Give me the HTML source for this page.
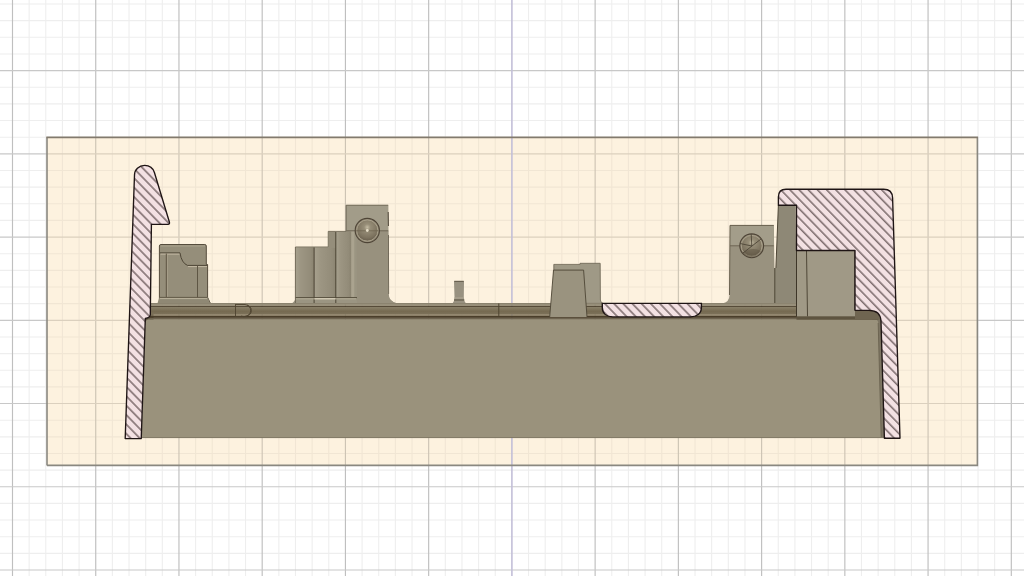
<!DOCTYPE html>
<html><head><meta charset="utf-8">
<style>
html,body{margin:0;padding:0;background:#ffffff;}
body{width:1024px;height:576px;overflow:hidden;position:relative;font-family:"Liberation Sans",sans-serif;}
svg{position:absolute;left:0;top:0;display:block;filter:blur(0.35px);}
</style></head><body>
<svg width="1024" height="576" viewBox="0 0 1024 576">
<defs>
<clipPath id="rc"><rect x="47" y="137.4" width="930.4" height="328"/></clipPath>
<pattern id="hatch" patternUnits="userSpaceOnUse" width="6.570" height="6.570" patternTransform="rotate(-44.24)">
<rect x="-1" y="-1" width="8.6" height="8.6" fill="#f3e1e3"/>
<line x1="4.67" y1="-1" x2="4.67" y2="8" stroke="#3e2e2e" stroke-width="1.0"/>
</pattern>
<pattern id="hatch2" patternUnits="userSpaceOnUse" width="6.570" height="6.570" patternTransform="rotate(-44.24)">
<rect x="-1" y="-1" width="8.6" height="8.6" fill="#f3e1e3"/>
<line x1="6.47" y1="-1" x2="6.47" y2="8" stroke="#3e2e2e" stroke-width="1.0"/>
<line x1="-0.1" y1="-1" x2="-0.1" y2="8" stroke="#3e2e2e" stroke-width="1.0"/>
</pattern>
<radialGradient id="screw" cx="0.5" cy="0.35" r="0.6">
<stop offset="0" stop-color="#c4bba3"/>
<stop offset="0.25" stop-color="#978e78"/>
<stop offset="0.8" stop-color="#7e7460"/>
<stop offset="1" stop-color="#6e6452"/>
</radialGradient>
<linearGradient id="railg" x1="0" y1="0" x2="0" y2="1">
<stop offset="0" stop-color="#898069"/>
<stop offset="0.55" stop-color="#766a51"/>
<stop offset="1" stop-color="#7d735b"/>
</linearGradient>
<linearGradient id="col" x1="0" y1="0" x2="1" y2="0">
<stop offset="0" stop-color="#a6a08d"/>
<stop offset="0.25" stop-color="#9d9683"/>
<stop offset="0.8" stop-color="#938c79"/>
<stop offset="1" stop-color="#8a8370"/>
</linearGradient>
</defs>
<rect width="1024" height="576" fill="#ffffff"/>
<g><line x1="29.14" y1="0" x2="29.14" y2="576" stroke="#eeeeee" stroke-width="1.1"/>
<line x1="45.78" y1="0" x2="45.78" y2="576" stroke="#eeeeee" stroke-width="1.1"/>
<line x1="62.43" y1="0" x2="62.43" y2="576" stroke="#eeeeee" stroke-width="1.1"/>
<line x1="79.08" y1="0" x2="79.08" y2="576" stroke="#eeeeee" stroke-width="1.1"/>
<line x1="112.37" y1="0" x2="112.37" y2="576" stroke="#eeeeee" stroke-width="1.1"/>
<line x1="129.02" y1="0" x2="129.02" y2="576" stroke="#eeeeee" stroke-width="1.1"/>
<line x1="145.67" y1="0" x2="145.67" y2="576" stroke="#eeeeee" stroke-width="1.1"/>
<line x1="162.31" y1="0" x2="162.31" y2="576" stroke="#eeeeee" stroke-width="1.1"/>
<line x1="195.61" y1="0" x2="195.61" y2="576" stroke="#eeeeee" stroke-width="1.1"/>
<line x1="212.25" y1="0" x2="212.25" y2="576" stroke="#eeeeee" stroke-width="1.1"/>
<line x1="228.90" y1="0" x2="228.90" y2="576" stroke="#eeeeee" stroke-width="1.1"/>
<line x1="245.55" y1="0" x2="245.55" y2="576" stroke="#eeeeee" stroke-width="1.1"/>
<line x1="278.84" y1="0" x2="278.84" y2="576" stroke="#eeeeee" stroke-width="1.1"/>
<line x1="295.49" y1="0" x2="295.49" y2="576" stroke="#eeeeee" stroke-width="1.1"/>
<line x1="312.14" y1="0" x2="312.14" y2="576" stroke="#eeeeee" stroke-width="1.1"/>
<line x1="328.78" y1="0" x2="328.78" y2="576" stroke="#eeeeee" stroke-width="1.1"/>
<line x1="362.08" y1="0" x2="362.08" y2="576" stroke="#eeeeee" stroke-width="1.1"/>
<line x1="378.72" y1="0" x2="378.72" y2="576" stroke="#eeeeee" stroke-width="1.1"/>
<line x1="395.37" y1="0" x2="395.37" y2="576" stroke="#eeeeee" stroke-width="1.1"/>
<line x1="412.02" y1="0" x2="412.02" y2="576" stroke="#eeeeee" stroke-width="1.1"/>
<line x1="445.31" y1="0" x2="445.31" y2="576" stroke="#eeeeee" stroke-width="1.1"/>
<line x1="461.96" y1="0" x2="461.96" y2="576" stroke="#eeeeee" stroke-width="1.1"/>
<line x1="478.61" y1="0" x2="478.61" y2="576" stroke="#eeeeee" stroke-width="1.1"/>
<line x1="495.25" y1="0" x2="495.25" y2="576" stroke="#eeeeee" stroke-width="1.1"/>
<line x1="528.55" y1="0" x2="528.55" y2="576" stroke="#eeeeee" stroke-width="1.1"/>
<line x1="545.19" y1="0" x2="545.19" y2="576" stroke="#eeeeee" stroke-width="1.1"/>
<line x1="561.84" y1="0" x2="561.84" y2="576" stroke="#eeeeee" stroke-width="1.1"/>
<line x1="578.49" y1="0" x2="578.49" y2="576" stroke="#eeeeee" stroke-width="1.1"/>
<line x1="611.78" y1="0" x2="611.78" y2="576" stroke="#eeeeee" stroke-width="1.1"/>
<line x1="628.43" y1="0" x2="628.43" y2="576" stroke="#eeeeee" stroke-width="1.1"/>
<line x1="645.08" y1="0" x2="645.08" y2="576" stroke="#eeeeee" stroke-width="1.1"/>
<line x1="661.72" y1="0" x2="661.72" y2="576" stroke="#eeeeee" stroke-width="1.1"/>
<line x1="695.02" y1="0" x2="695.02" y2="576" stroke="#eeeeee" stroke-width="1.1"/>
<line x1="711.66" y1="0" x2="711.66" y2="576" stroke="#eeeeee" stroke-width="1.1"/>
<line x1="728.31" y1="0" x2="728.31" y2="576" stroke="#eeeeee" stroke-width="1.1"/>
<line x1="744.96" y1="0" x2="744.96" y2="576" stroke="#eeeeee" stroke-width="1.1"/>
<line x1="778.25" y1="0" x2="778.25" y2="576" stroke="#eeeeee" stroke-width="1.1"/>
<line x1="794.90" y1="0" x2="794.90" y2="576" stroke="#eeeeee" stroke-width="1.1"/>
<line x1="811.55" y1="0" x2="811.55" y2="576" stroke="#eeeeee" stroke-width="1.1"/>
<line x1="828.19" y1="0" x2="828.19" y2="576" stroke="#eeeeee" stroke-width="1.1"/>
<line x1="861.49" y1="0" x2="861.49" y2="576" stroke="#eeeeee" stroke-width="1.1"/>
<line x1="878.13" y1="0" x2="878.13" y2="576" stroke="#eeeeee" stroke-width="1.1"/>
<line x1="894.78" y1="0" x2="894.78" y2="576" stroke="#eeeeee" stroke-width="1.1"/>
<line x1="911.43" y1="0" x2="911.43" y2="576" stroke="#eeeeee" stroke-width="1.1"/>
<line x1="944.72" y1="0" x2="944.72" y2="576" stroke="#eeeeee" stroke-width="1.1"/>
<line x1="961.37" y1="0" x2="961.37" y2="576" stroke="#eeeeee" stroke-width="1.1"/>
<line x1="978.02" y1="0" x2="978.02" y2="576" stroke="#eeeeee" stroke-width="1.1"/>
<line x1="994.66" y1="0" x2="994.66" y2="576" stroke="#eeeeee" stroke-width="1.1"/>
<line x1="0" y1="4.01" x2="1024" y2="4.01" stroke="#eeeeee" stroke-width="1.1"/>
<line x1="0" y1="20.66" x2="1024" y2="20.66" stroke="#eeeeee" stroke-width="1.1"/>
<line x1="0" y1="37.31" x2="1024" y2="37.31" stroke="#eeeeee" stroke-width="1.1"/>
<line x1="0" y1="53.95" x2="1024" y2="53.95" stroke="#eeeeee" stroke-width="1.1"/>
<line x1="0" y1="87.25" x2="1024" y2="87.25" stroke="#eeeeee" stroke-width="1.1"/>
<line x1="0" y1="103.89" x2="1024" y2="103.89" stroke="#eeeeee" stroke-width="1.1"/>
<line x1="0" y1="120.54" x2="1024" y2="120.54" stroke="#eeeeee" stroke-width="1.1"/>
<line x1="0" y1="137.19" x2="1024" y2="137.19" stroke="#eeeeee" stroke-width="1.1"/>
<line x1="0" y1="170.48" x2="1024" y2="170.48" stroke="#eeeeee" stroke-width="1.1"/>
<line x1="0" y1="187.13" x2="1024" y2="187.13" stroke="#eeeeee" stroke-width="1.1"/>
<line x1="0" y1="203.78" x2="1024" y2="203.78" stroke="#eeeeee" stroke-width="1.1"/>
<line x1="0" y1="220.42" x2="1024" y2="220.42" stroke="#eeeeee" stroke-width="1.1"/>
<line x1="0" y1="253.72" x2="1024" y2="253.72" stroke="#eeeeee" stroke-width="1.1"/>
<line x1="0" y1="270.36" x2="1024" y2="270.36" stroke="#eeeeee" stroke-width="1.1"/>
<line x1="0" y1="287.01" x2="1024" y2="287.01" stroke="#eeeeee" stroke-width="1.1"/>
<line x1="0" y1="303.66" x2="1024" y2="303.66" stroke="#eeeeee" stroke-width="1.1"/>
<line x1="0" y1="336.95" x2="1024" y2="336.95" stroke="#eeeeee" stroke-width="1.1"/>
<line x1="0" y1="353.60" x2="1024" y2="353.60" stroke="#eeeeee" stroke-width="1.1"/>
<line x1="0" y1="370.25" x2="1024" y2="370.25" stroke="#eeeeee" stroke-width="1.1"/>
<line x1="0" y1="386.89" x2="1024" y2="386.89" stroke="#eeeeee" stroke-width="1.1"/>
<line x1="0" y1="420.19" x2="1024" y2="420.19" stroke="#eeeeee" stroke-width="1.1"/>
<line x1="0" y1="436.83" x2="1024" y2="436.83" stroke="#eeeeee" stroke-width="1.1"/>
<line x1="0" y1="453.48" x2="1024" y2="453.48" stroke="#eeeeee" stroke-width="1.1"/>
<line x1="0" y1="470.13" x2="1024" y2="470.13" stroke="#eeeeee" stroke-width="1.1"/>
<line x1="0" y1="503.42" x2="1024" y2="503.42" stroke="#eeeeee" stroke-width="1.1"/>
<line x1="0" y1="520.07" x2="1024" y2="520.07" stroke="#eeeeee" stroke-width="1.1"/>
<line x1="0" y1="536.72" x2="1024" y2="536.72" stroke="#eeeeee" stroke-width="1.1"/>
<line x1="0" y1="553.36" x2="1024" y2="553.36" stroke="#eeeeee" stroke-width="1.1"/>
<line x1="12.49" y1="0" x2="12.49" y2="576" stroke="#bfbfbf" stroke-width="1.15"/>
<line x1="95.73" y1="0" x2="95.73" y2="576" stroke="#bfbfbf" stroke-width="1.15"/>
<line x1="178.96" y1="0" x2="178.96" y2="576" stroke="#bfbfbf" stroke-width="1.15"/>
<line x1="262.19" y1="0" x2="262.19" y2="576" stroke="#bfbfbf" stroke-width="1.15"/>
<line x1="345.43" y1="0" x2="345.43" y2="576" stroke="#bfbfbf" stroke-width="1.15"/>
<line x1="428.66" y1="0" x2="428.66" y2="576" stroke="#bfbfbf" stroke-width="1.15"/>
<line x1="595.13" y1="0" x2="595.13" y2="576" stroke="#bfbfbf" stroke-width="1.15"/>
<line x1="678.37" y1="0" x2="678.37" y2="576" stroke="#bfbfbf" stroke-width="1.15"/>
<line x1="761.61" y1="0" x2="761.61" y2="576" stroke="#bfbfbf" stroke-width="1.15"/>
<line x1="844.84" y1="0" x2="844.84" y2="576" stroke="#bfbfbf" stroke-width="1.15"/>
<line x1="928.07" y1="0" x2="928.07" y2="576" stroke="#bfbfbf" stroke-width="1.15"/>
<line x1="1011.31" y1="0" x2="1011.31" y2="576" stroke="#bfbfbf" stroke-width="1.15"/>
<line x1="0" y1="70.60" x2="1024" y2="70.60" stroke="#c8c8c8" stroke-width="1.15"/>
<line x1="0" y1="153.83" x2="1024" y2="153.83" stroke="#c8c8c8" stroke-width="1.15"/>
<line x1="0" y1="237.07" x2="1024" y2="237.07" stroke="#c8c8c8" stroke-width="1.15"/>
<line x1="0" y1="320.30" x2="1024" y2="320.30" stroke="#c8c8c8" stroke-width="1.15"/>
<line x1="0" y1="403.54" x2="1024" y2="403.54" stroke="#c8c8c8" stroke-width="1.15"/>
<line x1="0" y1="486.77" x2="1024" y2="486.77" stroke="#c8c8c8" stroke-width="1.15"/>
<line x1="0" y1="570.01" x2="1024" y2="570.01" stroke="#c8c8c8" stroke-width="1.15"/></g>
<rect x="47" y="137.4" width="930.4" height="328" fill="#fdf2df"/>
<g clip-path="url(#rc)"><line x1="29.14" y1="0" x2="29.14" y2="576" stroke="#f1e6d4" stroke-width="1.1"/>
<line x1="45.78" y1="0" x2="45.78" y2="576" stroke="#f1e6d4" stroke-width="1.1"/>
<line x1="62.43" y1="0" x2="62.43" y2="576" stroke="#f1e6d4" stroke-width="1.1"/>
<line x1="79.08" y1="0" x2="79.08" y2="576" stroke="#f1e6d4" stroke-width="1.1"/>
<line x1="112.37" y1="0" x2="112.37" y2="576" stroke="#f1e6d4" stroke-width="1.1"/>
<line x1="129.02" y1="0" x2="129.02" y2="576" stroke="#f1e6d4" stroke-width="1.1"/>
<line x1="145.67" y1="0" x2="145.67" y2="576" stroke="#f1e6d4" stroke-width="1.1"/>
<line x1="162.31" y1="0" x2="162.31" y2="576" stroke="#f1e6d4" stroke-width="1.1"/>
<line x1="195.61" y1="0" x2="195.61" y2="576" stroke="#f1e6d4" stroke-width="1.1"/>
<line x1="212.25" y1="0" x2="212.25" y2="576" stroke="#f1e6d4" stroke-width="1.1"/>
<line x1="228.90" y1="0" x2="228.90" y2="576" stroke="#f1e6d4" stroke-width="1.1"/>
<line x1="245.55" y1="0" x2="245.55" y2="576" stroke="#f1e6d4" stroke-width="1.1"/>
<line x1="278.84" y1="0" x2="278.84" y2="576" stroke="#f1e6d4" stroke-width="1.1"/>
<line x1="295.49" y1="0" x2="295.49" y2="576" stroke="#f1e6d4" stroke-width="1.1"/>
<line x1="312.14" y1="0" x2="312.14" y2="576" stroke="#f1e6d4" stroke-width="1.1"/>
<line x1="328.78" y1="0" x2="328.78" y2="576" stroke="#f1e6d4" stroke-width="1.1"/>
<line x1="362.08" y1="0" x2="362.08" y2="576" stroke="#f1e6d4" stroke-width="1.1"/>
<line x1="378.72" y1="0" x2="378.72" y2="576" stroke="#f1e6d4" stroke-width="1.1"/>
<line x1="395.37" y1="0" x2="395.37" y2="576" stroke="#f1e6d4" stroke-width="1.1"/>
<line x1="412.02" y1="0" x2="412.02" y2="576" stroke="#f1e6d4" stroke-width="1.1"/>
<line x1="445.31" y1="0" x2="445.31" y2="576" stroke="#f1e6d4" stroke-width="1.1"/>
<line x1="461.96" y1="0" x2="461.96" y2="576" stroke="#f1e6d4" stroke-width="1.1"/>
<line x1="478.61" y1="0" x2="478.61" y2="576" stroke="#f1e6d4" stroke-width="1.1"/>
<line x1="495.25" y1="0" x2="495.25" y2="576" stroke="#f1e6d4" stroke-width="1.1"/>
<line x1="528.55" y1="0" x2="528.55" y2="576" stroke="#f1e6d4" stroke-width="1.1"/>
<line x1="545.19" y1="0" x2="545.19" y2="576" stroke="#f1e6d4" stroke-width="1.1"/>
<line x1="561.84" y1="0" x2="561.84" y2="576" stroke="#f1e6d4" stroke-width="1.1"/>
<line x1="578.49" y1="0" x2="578.49" y2="576" stroke="#f1e6d4" stroke-width="1.1"/>
<line x1="611.78" y1="0" x2="611.78" y2="576" stroke="#f1e6d4" stroke-width="1.1"/>
<line x1="628.43" y1="0" x2="628.43" y2="576" stroke="#f1e6d4" stroke-width="1.1"/>
<line x1="645.08" y1="0" x2="645.08" y2="576" stroke="#f1e6d4" stroke-width="1.1"/>
<line x1="661.72" y1="0" x2="661.72" y2="576" stroke="#f1e6d4" stroke-width="1.1"/>
<line x1="695.02" y1="0" x2="695.02" y2="576" stroke="#f1e6d4" stroke-width="1.1"/>
<line x1="711.66" y1="0" x2="711.66" y2="576" stroke="#f1e6d4" stroke-width="1.1"/>
<line x1="728.31" y1="0" x2="728.31" y2="576" stroke="#f1e6d4" stroke-width="1.1"/>
<line x1="744.96" y1="0" x2="744.96" y2="576" stroke="#f1e6d4" stroke-width="1.1"/>
<line x1="778.25" y1="0" x2="778.25" y2="576" stroke="#f1e6d4" stroke-width="1.1"/>
<line x1="794.90" y1="0" x2="794.90" y2="576" stroke="#f1e6d4" stroke-width="1.1"/>
<line x1="811.55" y1="0" x2="811.55" y2="576" stroke="#f1e6d4" stroke-width="1.1"/>
<line x1="828.19" y1="0" x2="828.19" y2="576" stroke="#f1e6d4" stroke-width="1.1"/>
<line x1="861.49" y1="0" x2="861.49" y2="576" stroke="#f1e6d4" stroke-width="1.1"/>
<line x1="878.13" y1="0" x2="878.13" y2="576" stroke="#f1e6d4" stroke-width="1.1"/>
<line x1="894.78" y1="0" x2="894.78" y2="576" stroke="#f1e6d4" stroke-width="1.1"/>
<line x1="911.43" y1="0" x2="911.43" y2="576" stroke="#f1e6d4" stroke-width="1.1"/>
<line x1="944.72" y1="0" x2="944.72" y2="576" stroke="#f1e6d4" stroke-width="1.1"/>
<line x1="961.37" y1="0" x2="961.37" y2="576" stroke="#f1e6d4" stroke-width="1.1"/>
<line x1="978.02" y1="0" x2="978.02" y2="576" stroke="#f1e6d4" stroke-width="1.1"/>
<line x1="994.66" y1="0" x2="994.66" y2="576" stroke="#f1e6d4" stroke-width="1.1"/>
<line x1="0" y1="4.01" x2="1024" y2="4.01" stroke="#f1e6d4" stroke-width="1.1"/>
<line x1="0" y1="20.66" x2="1024" y2="20.66" stroke="#f1e6d4" stroke-width="1.1"/>
<line x1="0" y1="37.31" x2="1024" y2="37.31" stroke="#f1e6d4" stroke-width="1.1"/>
<line x1="0" y1="53.95" x2="1024" y2="53.95" stroke="#f1e6d4" stroke-width="1.1"/>
<line x1="0" y1="87.25" x2="1024" y2="87.25" stroke="#f1e6d4" stroke-width="1.1"/>
<line x1="0" y1="103.89" x2="1024" y2="103.89" stroke="#f1e6d4" stroke-width="1.1"/>
<line x1="0" y1="120.54" x2="1024" y2="120.54" stroke="#f1e6d4" stroke-width="1.1"/>
<line x1="0" y1="137.19" x2="1024" y2="137.19" stroke="#f1e6d4" stroke-width="1.1"/>
<line x1="0" y1="170.48" x2="1024" y2="170.48" stroke="#f1e6d4" stroke-width="1.1"/>
<line x1="0" y1="187.13" x2="1024" y2="187.13" stroke="#f1e6d4" stroke-width="1.1"/>
<line x1="0" y1="203.78" x2="1024" y2="203.78" stroke="#f1e6d4" stroke-width="1.1"/>
<line x1="0" y1="220.42" x2="1024" y2="220.42" stroke="#f1e6d4" stroke-width="1.1"/>
<line x1="0" y1="253.72" x2="1024" y2="253.72" stroke="#f1e6d4" stroke-width="1.1"/>
<line x1="0" y1="270.36" x2="1024" y2="270.36" stroke="#f1e6d4" stroke-width="1.1"/>
<line x1="0" y1="287.01" x2="1024" y2="287.01" stroke="#f1e6d4" stroke-width="1.1"/>
<line x1="0" y1="303.66" x2="1024" y2="303.66" stroke="#f1e6d4" stroke-width="1.1"/>
<line x1="0" y1="336.95" x2="1024" y2="336.95" stroke="#f1e6d4" stroke-width="1.1"/>
<line x1="0" y1="353.60" x2="1024" y2="353.60" stroke="#f1e6d4" stroke-width="1.1"/>
<line x1="0" y1="370.25" x2="1024" y2="370.25" stroke="#f1e6d4" stroke-width="1.1"/>
<line x1="0" y1="386.89" x2="1024" y2="386.89" stroke="#f1e6d4" stroke-width="1.1"/>
<line x1="0" y1="420.19" x2="1024" y2="420.19" stroke="#f1e6d4" stroke-width="1.1"/>
<line x1="0" y1="436.83" x2="1024" y2="436.83" stroke="#f1e6d4" stroke-width="1.1"/>
<line x1="0" y1="453.48" x2="1024" y2="453.48" stroke="#f1e6d4" stroke-width="1.1"/>
<line x1="0" y1="470.13" x2="1024" y2="470.13" stroke="#f1e6d4" stroke-width="1.1"/>
<line x1="0" y1="503.42" x2="1024" y2="503.42" stroke="#f1e6d4" stroke-width="1.1"/>
<line x1="0" y1="520.07" x2="1024" y2="520.07" stroke="#f1e6d4" stroke-width="1.1"/>
<line x1="0" y1="536.72" x2="1024" y2="536.72" stroke="#f1e6d4" stroke-width="1.1"/>
<line x1="0" y1="553.36" x2="1024" y2="553.36" stroke="#f1e6d4" stroke-width="1.1"/>
<line x1="12.49" y1="0" x2="12.49" y2="576" stroke="#cdc4b4" stroke-width="1.15"/>
<line x1="95.73" y1="0" x2="95.73" y2="576" stroke="#cdc4b4" stroke-width="1.15"/>
<line x1="178.96" y1="0" x2="178.96" y2="576" stroke="#cdc4b4" stroke-width="1.15"/>
<line x1="262.19" y1="0" x2="262.19" y2="576" stroke="#cdc4b4" stroke-width="1.15"/>
<line x1="345.43" y1="0" x2="345.43" y2="576" stroke="#cdc4b4" stroke-width="1.15"/>
<line x1="428.66" y1="0" x2="428.66" y2="576" stroke="#cdc4b4" stroke-width="1.15"/>
<line x1="595.13" y1="0" x2="595.13" y2="576" stroke="#cdc4b4" stroke-width="1.15"/>
<line x1="678.37" y1="0" x2="678.37" y2="576" stroke="#cdc4b4" stroke-width="1.15"/>
<line x1="761.61" y1="0" x2="761.61" y2="576" stroke="#cdc4b4" stroke-width="1.15"/>
<line x1="844.84" y1="0" x2="844.84" y2="576" stroke="#cdc4b4" stroke-width="1.15"/>
<line x1="928.07" y1="0" x2="928.07" y2="576" stroke="#cdc4b4" stroke-width="1.15"/>
<line x1="1011.31" y1="0" x2="1011.31" y2="576" stroke="#cdc4b4" stroke-width="1.15"/>
<line x1="0" y1="70.60" x2="1024" y2="70.60" stroke="#dbd0be" stroke-width="1.15"/>
<line x1="0" y1="153.83" x2="1024" y2="153.83" stroke="#dbd0be" stroke-width="1.15"/>
<line x1="0" y1="237.07" x2="1024" y2="237.07" stroke="#dbd0be" stroke-width="1.15"/>
<line x1="0" y1="320.30" x2="1024" y2="320.30" stroke="#dbd0be" stroke-width="1.15"/>
<line x1="0" y1="403.54" x2="1024" y2="403.54" stroke="#dbd0be" stroke-width="1.15"/>
<line x1="0" y1="486.77" x2="1024" y2="486.77" stroke="#dbd0be" stroke-width="1.15"/>
<line x1="0" y1="570.01" x2="1024" y2="570.01" stroke="#dbd0be" stroke-width="1.15"/></g>
<line x1="511.9" y1="0" x2="511.9" y2="576" stroke="#c3bfd8" stroke-width="1.6"/>
<path d="M47,465.4 L47,137.4 M977.4,137.4 L977.4,465.4 L47,465.4" fill="none" stroke="#8a8880" stroke-width="1.6"/>
<path d="M46.3,137.4 L978.1,137.4" fill="none" stroke="#827a6d" stroke-width="1.6"/>
<!-- body -->
<rect x="143.5" y="313" width="10" height="12" fill="#5e5440"/>
<path d="M872,319 L881.5,319 L884.6,437.6 L880,437.6 L876,326 L872,326 Z" fill="#7d7563"/>
<path d="M145.3,323 Q145.6,319.3 149.5,319.3 L874.5,319.3 Q878,319.3 878.2,323 L881.2,437.6 L141.3,437.6 Z" fill="#9a927c"/>
<path d="M878.2,323 L881.2,437.6" stroke="#6a624f" stroke-width="0.9"/>
<path d="M141.3,437.6 L884.4,437.6" stroke="#7d7562" stroke-width="1"/>
<!-- left small block -->
<g>
<path d="M159.4,303 L159.4,246 Q159.4,244.5 161,244.5 L204.8,244.5 Q206.3,244.5 206.3,246 L206.3,264.5 L207.6,264.5 L207.6,297.3 L210.2,303 Z" fill="#958e7a" stroke="#554c3c" stroke-width="1"/>
<path d="M160.5,246 L205,246" stroke="#b0a892" stroke-width="0.8"/>
<path d="M160,252.9 L180,252.9 Q181.5,263 187.5,265.4 L207.5,265.4" fill="none" stroke="#4e4636" stroke-width="1"/>
<path d="M160.5,254.1 L179.5,254.1 M188,266.6 L207,266.6" fill="none" stroke="#c9c0a9" stroke-width="0.9"/>
<line x1="166.3" y1="253.5" x2="166.3" y2="297.3" stroke="#5e5644" stroke-width="1"/>
<line x1="197.5" y1="265.8" x2="197.5" y2="303" stroke="#5e5644" stroke-width="1"/>
<line x1="167.5" y1="255" x2="167.5" y2="297" stroke="#a9a18b" stroke-width="0.8"/>
<path d="M157.5,303.2 L159.4,297.3 L207.6,297.3 L210.2,303.2 Z" fill="#8f8874"/>
<line x1="159.4" y1="297.4" x2="207.6" y2="297.4" stroke="#5e5644" stroke-width="0.9"/>
<line x1="160" y1="298.6" x2="207" y2="298.6" stroke="#c0b7a0" stroke-width="0.9"/>
</g>
<!-- stepped blocks with tall block -->
<g>
<path d="M291.9,303.4 Q295.4,301 295.4,297.6 L295.4,247 L328.25,247 L328.25,231.4 L346.1,231.4 L346.1,205.2 L388.2,205.2 L388.6,294 Q389,302 397.4,303.4 Z" fill="#9b9582"/>
<path d="M346.1,205.2 L388.2,205.2 L388.2,230.6 L346.1,230.6 Z" fill="#a29c89"/>
<path d="M295.4,303 L295.4,247 L328.25,247 L328.25,231.4 L346.1,231.4 L346.1,205.2 L388.2,205.2" fill="none" stroke="#6a6250" stroke-width="0.9"/>
<path d="M388.2,212 L388.4,226 M388.4,235 L388.6,294" stroke="#3e3628" stroke-width="0.9"/>
<path d="M356.5,232 L357,303 L397.4,303.4 Q389,302 388.6,294 L388.4,231 Z" fill="#98917e"/>
<rect x="296" y="247.5" width="18.1" height="50" fill="url(#col)"/>
<rect x="314.6" y="247.5" width="21.8" height="50" fill="url(#col)"/>
<rect x="328.6" y="231.8" width="7.8" height="16" fill="#958e7b"/>
<rect x="336.2" y="231.8" width="15.1" height="65.5" fill="url(#col)"/>
<line x1="314.1" y1="247.5" x2="314.1" y2="303" stroke="#4e4636" stroke-width="1"/>
<line x1="335.8" y1="232" x2="335.8" y2="303" stroke="#4e4636" stroke-width="1"/>
<rect x="351.3" y="231" width="3" height="66" fill="#aaa38f"/>
<line x1="346.4" y1="230.8" x2="388.4" y2="230.8" stroke="#6a604e" stroke-width="0.9"/>
<line x1="295.6" y1="297.6" x2="357" y2="297.6" stroke="#4e4636" stroke-width="0.9"/>
<line x1="296" y1="298.8" x2="356" y2="298.8" stroke="#b9b09a" stroke-width="0.9"/>
<line x1="314.5" y1="298.8" x2="335.5" y2="298.8" stroke="#e0d8c2" stroke-width="1"/>
<circle cx="367.3" cy="230.5" r="12.1" fill="#8c8370" stroke="#4e4436" stroke-width="1.1"/>
<circle cx="367.3" cy="230.5" r="10.6" fill="url(#screw)" stroke="#b3aa93" stroke-width="0.8"/>
<line x1="356" y1="230.8" x2="378.6" y2="230.8" stroke="#6a604e" stroke-width="0.7"/>
<circle cx="367.3" cy="230.5" r="1.4" fill="#e6dec8"/>
</g>
<!-- peg -->
<path d="M452.5,303.4 Q454.5,301 454.5,297 L454,281.8 Q454,281 455,281 L463,281 Q464,281 464,281.8 L463.8,297 Q463.8,301 466,303.4 Z" fill="#989180"/>
<line x1="454.2" y1="281.3" x2="463.8" y2="281.3" stroke="#5e5644" stroke-width="1"/>
<line x1="454.3" y1="298" x2="463.9" y2="298" stroke="#b5ad98" stroke-width="0.9"/>
<line x1="454" y1="300" x2="464.2" y2="300" stroke="#5e5644" stroke-width="1.1"/>
<!-- center block back -->
<path d="M553.8,303.4 L553.8,264.4 L580,264.4 L580,263.3 L600.2,263.3 L600.4,300 Q601,303.4 603,303.4 Z" fill="#9f9986" stroke="#6a6250" stroke-width="0.8"/>
<!-- right block with screw -->
<g>
<path d="M722,303.4 Q729.5,302.5 729.5,295 L730,225.4 L773.8,225.4 L775,303.4 Z" fill="#99927f"/>
<path d="M730,225.4 L773.8,225.4 L773.8,245.8 L730,245.8 Z" fill="#a39d8a"/>
<path d="M729.5,295 L730,225.4 L773.8,225.4" fill="none" stroke="#5e5644" stroke-width="0.9"/>
<line x1="730" y1="245.8" x2="773.8" y2="245.8" stroke="#6a604e" stroke-width="0.9"/>
<circle cx="751.7" cy="245.8" r="11.9" fill="#8c8370" stroke="#4e4436" stroke-width="1.1"/>
<circle cx="751.7" cy="245.8" r="10.4" fill="url(#screw)" stroke="#b3aa93" stroke-width="0.8"/>
<path d="M742,253 Q752,246 761,251 Q757,256.5 751.7,257 Q746,256.5 742,253 Z" fill="#5e5442" opacity="0.5"/>
<path d="M743,253 L761,239" stroke="#4e4638" stroke-width="0.9"/>
<path d="M751.2,234 L751.8,246 M740,243.5 L751.8,246" stroke="#4e4638" stroke-width="0.9"/>
</g>
<!-- rail -->
<rect x="149.5" y="303" width="648" height="1.9" fill="#8b836f"/>
<rect x="149.5" y="304.8" width="648" height="1.0" fill="#9d957f"/>
<rect x="149.5" y="305.8" width="648" height="1.1" fill="#3e3220"/>
<rect x="149.5" y="306.9" width="648" height="7.9" fill="url(#railg)"/>
<rect x="149.5" y="314.8" width="648" height="1.0" fill="#857a62"/>
<rect x="149.5" y="315.8" width="648" height="2.1" fill="#4a3e2a"/>
<rect x="149.5" y="317.9" width="728" height="1.6" fill="#6e6450"/>
<line x1="498.8" y1="303.5" x2="498.8" y2="316" stroke="#4e4330" stroke-width="1"/>
<!-- D detail on rail -->
<path d="M235.5,304 L235.5,316.5 M235.5,304.5 L245,304.5 A8.5,6.2 0 0 1 245,316.5 L235.5,316.5 M247,305 A6,5.5 0 0 1 241,316" fill="none" stroke="#4e4330" stroke-width="0.9"/>
<!-- center trapezoid over rail -->
<path d="M553.5,270.1 L583.6,270.1 L587,317 L549.7,317 Z" fill="#9a937f"/>
<path d="M549.7,317 L553.5,270.1 L583.6,270.1 L587,317" fill="none" stroke="#4e4636" stroke-width="0.9"/>
<!-- strip -->
<path d="M778.4,205 L795.6,205 L796.6,303.2 L774.3,303.2 L774.3,268 L775.9,268 Z" fill="#8e8876"/>
<path d="M774.8,303 L774.8,268 M775.9,268 L778.4,205" fill="none" stroke="#4e4636" stroke-width="1"/>
<!-- right block under hatch -->
<rect x="796.5" y="250.5" width="58.5" height="66.5" fill="#a09986"/>
<path d="M796.5,250.5 L796.5,317 M855,250.5 L855,310" stroke="#3e3628" stroke-width="1"/>
<line x1="806.5" y1="251" x2="807.5" y2="316.5" stroke="#4e4636" stroke-width="1"/>
<rect x="796.5" y="316.3" width="82" height="3.4" fill="#5e5440"/>
<path d="M855,310.3 L869,310.3 Q880.5,310.3 881,321 L881,319.5 L855,319.5 Z" fill="#6f6551"/>
<!-- left hatched piece -->
<path d="M134.5,175 C134.5,169.5 139,165.4 144.6,165.4 C150,165.4 153.3,168.8 154.4,172.5 L169.3,221.8 Q170,224.4 168,224.4 L151.4,224.4 L150.3,315 Q150,317.2 147.5,317.8 L145.3,318.4 L141.25,438.6 L125.2,438.6 Z" fill="url(#hatch)" stroke="#1e1414" stroke-width="1.35" stroke-linejoin="round"/>
<!-- right hatched piece -->
<path d="M778.4,197 Q778.4,189.2 786,189.2 L883.5,189.2 Q892.4,189.2 892.6,198 L900,438.2 L884.4,438.2 L881,321 Q880.5,310.3 869,310.3 L855,310.3 L855,250.5 L796.5,250.5 L796.5,205.2 L778.4,205.2 Z" fill="url(#hatch2)" stroke="#1e1414" stroke-width="1.35" stroke-linejoin="round"/>
<!-- slot hatch -->
<path d="M602.3,303.4 L701.4,303.4 L701.4,307.5 C701.4,313.8 696.5,316.9 690.5,316.9 L613,316.9 C607,316.9 602.3,313.8 602.3,307.5 Z" fill="url(#hatch)" stroke="#1e1414" stroke-width="1.4"/>

</svg>
</body></html>
